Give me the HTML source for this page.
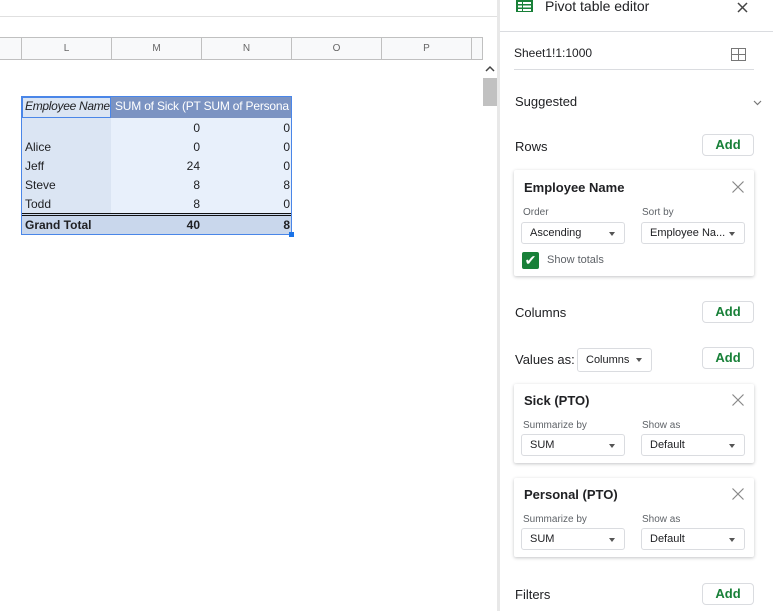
<!DOCTYPE html>
<html><head><style>
*{box-sizing:border-box;margin:0;padding:0}
body{width:773px;height:611px;overflow:hidden;background:#fff;font-family:"Liberation Sans",Arial,sans-serif;position:relative;color:#202124}
.a{position:absolute}
.ch{position:absolute;top:38px;height:21px;border-right:1px solid #c0c0c0;background:#f8f9fa;font-size:10px;color:#666;text-align:center;line-height:21px}
.c{position:absolute;font-size:12px;line-height:19px;height:19px;color:#202124}
.h{font-size:13px;color:#202124;position:absolute;left:515px}
.add{position:absolute;left:702px;width:52px;height:22px;border:1px solid #dadce0;border-radius:4px;color:#188038;font-weight:bold;font-size:13px;text-align:center;line-height:20px}
.card{position:absolute;left:514px;width:240px;background:#fff;box-shadow:0 1px 3px rgba(60,64,67,.3);border-radius:2px}
.ct{position:absolute;left:10px;font-size:13px;font-weight:bold;color:#202124}
.x{position:absolute;right:10px}
.lb{position:absolute;font-size:10px;color:#5f6368}
.sel{position:absolute;width:104px;height:22px;border:1px solid #dadce0;border-radius:3px;font-size:11px;line-height:20px;padding-left:8px;color:#202124}
.sel:after{content:"";position:absolute;right:9px;top:9px;border:3.5px solid transparent;border-top:4px solid #555;border-bottom:0}
</style></head><body>
<div class="a" style="left:0;top:16px;width:497px;height:1px;background:#e0e0e0"></div>
<div class="a" style="left:0;top:37px;width:483px;height:23px;background:#f8f9fa;border-top:1px solid #c0c0c0;border-bottom:1px solid #c0c0c0"></div>
<div class="ch" style="left:0;width:22px"></div>
<div class="ch" style="left:22px;width:90px">L</div>
<div class="ch" style="left:112px;width:90px">M</div>
<div class="ch" style="left:202px;width:90px">N</div>
<div class="ch" style="left:292px;width:90px">O</div>
<div class="ch" style="left:382px;width:90px">P</div>
<div class="ch" style="left:472px;width:11px"></div>
<div class="a" style="left:483px;top:60px;width:14px;height:551px;background:#fff"></div>
<svg class="a" style="left:485px;top:65px" width="10" height="7"><path d="M1 6 L5 2 L9 6" fill="none" stroke="#444" stroke-width="1.5"/></svg>
<div class="a" style="left:483px;top:78px;width:14px;height:28px;background:#c1c1c1"></div>
<div class="a" style="left:497px;top:0;width:3px;height:611px;background:#e8e8e8"></div>

<div class="a" style="left:21px;top:96px;width:271px;height:139px;border:1px solid #4a86e8;background:#e8f0fb"></div>
<div class="a" style="left:22px;top:97px;width:89px;height:137px;background:#dbe5f3"></div>
<div class="a" style="left:111px;top:97px;width:180px;height:21px;background:#7b93c2"></div>
<div class="a" style="left:22px;top:97px;width:89px;height:21px;border:1px solid #4a86e8;background:#dbe5f3"></div>
<div class="c" style="left:25px;top:97px;font-style:italic;height:21px;line-height:19px;letter-spacing:-.3px">Employee Name</div>
<div class="c" style="left:115px;top:97px;color:#fff;letter-spacing:-.2px;width:176px;overflow:hidden;white-space:nowrap">SUM of Sick (PT SUM of Persona</div>
<div class="c" style="left:111px;top:119px;width:89px;text-align:right">0</div><div class="c" style="left:201px;top:119px;width:89px;text-align:right">0</div>
<div class="c" style="left:25px;top:138px">Alice</div><div class="c" style="left:111px;top:138px;width:89px;text-align:right">0</div><div class="c" style="left:201px;top:138px;width:89px;text-align:right">0</div>
<div class="c" style="left:25px;top:157px">Jeff</div><div class="c" style="left:111px;top:157px;width:89px;text-align:right">24</div><div class="c" style="left:201px;top:157px;width:89px;text-align:right">0</div>
<div class="c" style="left:25px;top:176px">Steve</div><div class="c" style="left:111px;top:176px;width:89px;text-align:right">8</div><div class="c" style="left:201px;top:176px;width:89px;text-align:right">8</div>
<div class="c" style="left:25px;top:195px">Todd</div><div class="c" style="left:111px;top:195px;width:89px;text-align:right">8</div><div class="c" style="left:201px;top:195px;width:89px;text-align:right">0</div>
<div class="a" style="left:22px;top:213px;width:269px;height:21px;background:#c9d7ec;border-top:3px double #111"></div>
<div class="c" style="left:25px;top:216px;font-weight:bold">Grand Total</div><div class="c" style="left:111px;top:216px;width:89px;text-align:right;font-weight:bold">40</div><div class="c" style="left:201px;top:216px;width:89px;text-align:right;font-weight:bold">8</div>
<div class="a" style="left:289px;top:232px;width:5px;height:5px;background:#1a73e8"></div>

<svg class="a" style="left:516px;top:0" width="17" height="12"><rect x="0" y="0" width="17" height="12" fill="#188038"/><rect x="2" y="2" width="4" height="2" fill="#fff"/><rect x="7" y="2" width="8" height="2" fill="#fff"/><rect x="2" y="5.5" width="4" height="2" fill="#fff"/><rect x="7" y="5.5" width="8" height="2" fill="#fff"/><rect x="2" y="9" width="4" height="2" fill="#fff"/><rect x="7" y="9" width="8" height="2" fill="#fff"/></svg>
<div class="a" style="left:545px;top:-2px;font-size:14px;color:#202124">Pivot table editor</div>
<svg class="a" style="left:737px;top:2px" width="11" height="11"><path d="M1 1 L10 10 M10 1 L1 10" stroke="#444" stroke-width="1.5"/></svg>
<div class="a" style="left:500px;top:31px;width:273px;height:1px;background:#dadce0"></div>
<div class="a" style="left:514px;top:46px;font-size:12px">Sheet1!1:1000</div>
<svg class="a" style="left:731px;top:48px" width="15" height="13"><rect x=".5" y=".5" width="14" height="12" fill="none" stroke="#777"/><line x1="7.5" y1="0" x2="7.5" y2="13" stroke="#777"/><line x1="0" y1="6.5" x2="15" y2="6.5" stroke="#777"/></svg>
<div class="a" style="left:514px;top:69px;width:240px;height:1px;background:#dadce0"></div>
<div class="h" style="top:94px">Suggested</div>
<svg class="a" style="left:753px;top:100px" width="9" height="6"><path d="M1 1 L4.5 4.5 L8 1" fill="none" stroke="#777" stroke-width="1.2"/></svg>
<div class="h" style="top:139px">Rows</div>
<div class="add" style="top:134px">Add</div>
<div class="card" style="top:170px;height:106px">
<div class="ct" style="top:10px">Employee Name</div><svg class="x" style="top:11px" width="12" height="12"><path d="M0.5 0.5 L11.5 11.5 M11.5 0.5 L0.5 11.5" stroke="#888" stroke-width="1.2"/></svg>
<div class="lb" style="left:9px;top:37px">Order</div><div class="lb" style="left:128px;top:37px">Sort by</div>
<div class="sel" style="left:7px;top:52px">Ascending</div><div class="sel" style="left:127px;top:52px">Employee Na...</div>
<div class="a" style="left:8px;top:82px;width:17px;height:17px;background:#188038;border-radius:2px;color:#fff;font-size:14px;line-height:17px;text-align:center">&#10004;</div>
<div class="a" style="left:33px;top:84px;font-size:11px;color:#5f6368">Show totals</div>
</div>
<div class="h" style="top:305px">Columns</div>
<div class="add" style="top:301px">Add</div>
<div class="h" style="top:352px">Values as:</div>
<div class="sel" style="left:577px;top:348px;width:75px;height:24px;line-height:22px">Columns</div>
<div class="add" style="top:347px">Add</div>
<div class="card" style="top:384px;height:79px">
<div class="ct" style="top:9px">Sick (PTO)</div><svg class="x" style="top:10px" width="12" height="12"><path d="M0.5 0.5 L11.5 11.5 M11.5 0.5 L0.5 11.5" stroke="#888" stroke-width="1.2"/></svg>
<div class="lb" style="left:9px;top:36px">Summarize by</div><div class="lb" style="left:128px;top:36px">Show as</div>
<div class="sel" style="left:7px;top:50px">SUM</div><div class="sel" style="left:127px;top:50px">Default</div>
</div>
<div class="card" style="top:478px;height:79px">
<div class="ct" style="top:9px">Personal (PTO)</div><svg class="x" style="top:10px" width="12" height="12"><path d="M0.5 0.5 L11.5 11.5 M11.5 0.5 L0.5 11.5" stroke="#888" stroke-width="1.2"/></svg>
<div class="lb" style="left:9px;top:36px">Summarize by</div><div class="lb" style="left:128px;top:36px">Show as</div>
<div class="sel" style="left:7px;top:50px">SUM</div><div class="sel" style="left:127px;top:50px">Default</div>
</div>
<div class="h" style="top:587px">Filters</div>
<div class="add" style="top:583px">Add</div>
</body></html>
